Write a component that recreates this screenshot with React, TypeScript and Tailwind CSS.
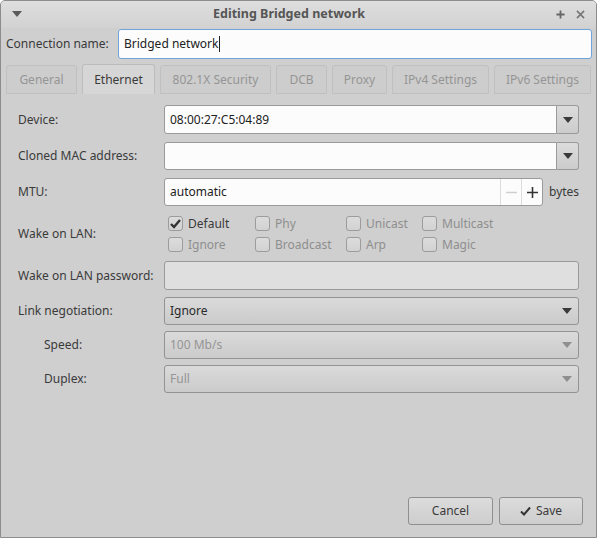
import React from 'react';

function Arrow({ dim = false }: { dim?: boolean }) {
  return (
    <svg width="10" height="6" viewBox="0 0 10 6">
      <path d="M0 0 H10 L5 6 Z" fill={dim ? '#8f8f8f' : '#3a3a3a'} />
    </svg>
  );
}

function Check() {
  return (
    <svg width="13" height="13" viewBox="0 0 13 13">
      <path d="M2 7 L5 10 L11 3" fill="none" stroke="#333" strokeWidth="2.4" />
    </svg>
  );
}

function Checkbox({ label, checked = false }: { label: string; checked?: boolean }) {
  return (
    <div className="flex items-center gap-[5px] h-[21px]">
      <span className="w-[15px] h-[15px] rounded-[3px] border border-[#9c9c9c] bg-gradient-to-b from-[#dcdcdc] to-[#d2d2d2] flex items-center justify-center">
        {checked && <Check />}
      </span>
      <span className={checked ? 'text-[#3a3a3a]' : 'text-[#8e8e8e]'}>{label}</span>
    </div>
  );
}

function Tab({ label, active = false, w }: { label: string; active?: boolean; w: string }) {
  return (
    <div
      className={`${w} h-[29px] flex items-center justify-center rounded-t-[3px] border ${
        active
          ? 'border-[#bcbcbc] border-b-0 bg-[#d6d6d6] text-[#3a3a3a] h-[30px]'
          : 'border-[#c0c0c0] bg-[#cdcdcd] text-[#959595]'
      }`}
    >
      {label}
    </div>
  );
}

function Row({ label, indent = false, children, cls }: { label: string; indent?: boolean; children: React.ReactNode; cls: string }) {
  return (
    <div className={`flex items-center ${cls}`}>
      <div className={`w-[146px] shrink-0 whitespace-nowrap ${indent ? 'pl-[26px]' : ''}`}>{label}</div>
      {children}
    </div>
  );
}

function Combo({ value, entry = true, dim = false, h = 'h-[29px]' }: { value: string; entry?: boolean; dim?: boolean; h?: string }) {
  if (entry) {
    return (
      <div className={`flex flex-1 ${h}`}>
        <div className="flex-1 flex items-center pl-[5px] bg-[#fcfcfc] border border-[#9a9a9a] rounded-l-[3px] text-[#222]">
          {value}
        </div>
        <div className="w-[22px] flex items-center justify-center border border-l-0 border-[#9a9a9a] rounded-r-[3px] bg-gradient-to-b from-[#dcdcdc] to-[#cccccc]">
          <Arrow />
        </div>
      </div>
    );
  }
  return (
    <div
      className={`flex-1 ${h} flex items-center justify-between pl-[5px] pr-[6px] border border-[#939393] rounded-[3px] bg-gradient-to-b from-[#dadada] to-[#cbcbcb] ${
        dim ? 'text-[#959595]' : 'text-[#2a2a2a]'
      }`}
    >
      <span>{value}</span>
      <Arrow dim={dim} />
    </div>
  );
}

export default function App() {
  return (
    <div
      className="w-[597px] h-[538px] bg-[#cfcfcf] border border-[#8c8c8c] rounded-t-[5px] overflow-hidden flex flex-col text-[12px] text-[#3a3a3a]"
      style={{ fontFamily: '"Noto Sans", "Open Sans", sans-serif' }}
    >
      {/* Title bar */}
      <div className="h-[27px] shrink-0 flex items-center px-[11px] bg-gradient-to-b from-[#dedede] to-[#d2d2d2]">
        <svg width="10" height="6" viewBox="0 0 10 6" className="mt-[-2px]">
          <path d="M0 0 H10 L5 6 Z" fill="#5a5a5a" />
        </svg>
        <div className="flex-1 text-center font-bold text-[#555] text-[12.5px]">Editing Bridged network</div>
        <div className="flex items-center gap-[11px]">
          <svg width="9" height="9" viewBox="0 0 10 10">
            <path d="M5 0.5 V9.5 M0.5 5 H9.5" stroke="#666" strokeWidth="2" />
          </svg>
          <svg width="9" height="9" viewBox="0 0 10 10">
            <path d="M1 1 L9 9 M9 1 L1 9" stroke="#777" strokeWidth="1.8" />
          </svg>
        </div>
      </div>

      {/* Connection name */}
      <div className="flex items-center mt-[1px] pl-[5px] pr-[4px]">
        <div className="w-[112px]">Connection name:</div>
        <div className="flex-1 h-[30px] flex items-center pl-[5px] bg-[#fcfcfc] border border-[#6fa5dd] rounded-[3px] text-[#222]">
          Bridged network<span className="w-px h-[16px] bg-[#222] ml-[1px]" />
        </div>
      </div>

      {/* Tabs */}
      <div className="flex items-end gap-[5px] mt-[5px] pl-[5px]">
        <Tab label="General" w="w-[71px]" />
        <Tab label="Ethernet" w="w-[73px]" active />
        <Tab label="802.1X Security" w="w-[111px]" />
        <Tab label="DCB" w="w-[51px]" />
        <Tab label="Proxy" w="w-[55px]" />
        <Tab label="IPv4 Settings" w="w-[97px]" />
        <Tab label="IPv6 Settings" w="w-[97px]" />
      </div>

      {/* Ethernet page */}
      <div className="flex flex-col pl-[17px] pr-[17px]">
        <Row label="Device:" cls="mt-[11px]">
          <Combo value="08:00:27:C5:04:89" />
        </Row>
        <Row label="Cloned MAC address:" cls="mt-[8px]">
          <Combo value="" h="h-[28px]" />
        </Row>
        <Row label="MTU:" cls="mt-[8px]">
          <div className="flex items-center flex-1">
            <div className="w-[379px] h-[28px] flex border border-[#9a9a9a] rounded-[3px] bg-[#fcfcfc]">
              <div className="flex-1 flex items-center pl-[5px] text-[#222]">automatic</div>
              <div className="w-[21px] flex items-center justify-center border-l border-[#dcdcdc]">
                <svg width="11" height="11" viewBox="0 0 11 11">
                  <path d="M0 5.5 H11" stroke="#cfcfcf" strokeWidth="1.6" />
                </svg>
              </div>
              <div className="w-[21px] flex items-center justify-center border-l border-[#dcdcdc]">
                <svg width="11" height="11" viewBox="0 0 11 11">
                  <path d="M0 5.5 H11 M5.5 0 V11" stroke="#333" strokeWidth="1.6" />
                </svg>
              </div>
            </div>
            <span className="ml-[6px]">bytes</span>
          </div>
        </Row>
        <Row label="Wake on LAN:" cls="mt-[7px]">
          <div className="flex pl-[4px]">
            <div className="w-[87px] flex flex-col">
              <Checkbox label="Default" checked />
              <Checkbox label="Ignore" />
            </div>
            <div className="w-[91px] flex flex-col">
              <Checkbox label="Phy" />
              <Checkbox label="Broadcast" />
            </div>
            <div className="w-[76px] flex flex-col">
              <Checkbox label="Unicast" />
              <Checkbox label="Arp" />
            </div>
            <div className="flex flex-col">
              <Checkbox label="Multicast" />
              <Checkbox label="Magic" />
            </div>
          </div>
        </Row>
        <Row label="Wake on LAN password:" cls="mt-[6px]">
          <div className="flex-1 h-[29px] border border-[#9a9a9a] rounded-[3px] bg-[#dfdfdf]" />
        </Row>
        <Row label="Link negotiation:" cls="mt-[7px]">
          <Combo value="Ignore" entry={false} h="h-[28px]" />
        </Row>
        <Row label="Speed:" indent cls="mt-[6px]">
          <Combo value="100 Mb/s" entry={false} dim h="h-[28px]" />
        </Row>
        <Row label="Duplex:" indent cls="mt-[6px]">
          <Combo value="Full" entry={false} dim h="h-[28px]" />
        </Row>
      </div>

      {/* Buttons */}
      <div className="flex-1" />
      <div className="flex justify-end gap-[6px] pr-[13px] mb-[12px]">
        <button className="w-[85px] h-[28px] flex items-center justify-center border border-[#8f8f8f] rounded-[3px] bg-gradient-to-b from-[#dcdcdc] to-[#cdcdcd] text-[#3a3a3a]">
          Cancel
        </button>
        <button className="w-[84px] h-[28px] flex items-center justify-center gap-[5px] border border-[#8f8f8f] rounded-[3px] bg-gradient-to-b from-[#dcdcdc] to-[#cdcdcd] text-[#3a3a3a]">
          <svg width="11" height="10" viewBox="0 0 11 10">
            <path d="M1 5.5 L4 8.5 L10 1.5" fill="none" stroke="#333" strokeWidth="2" />
          </svg>
          Save
        </button>
      </div>
    </div>
  );
}
